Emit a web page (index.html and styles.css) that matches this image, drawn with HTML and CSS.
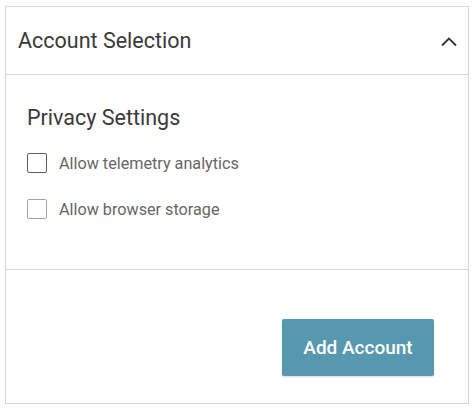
FILE: index.html
```html
<!DOCTYPE html>
<html>
<head>
<meta charset="utf-8">
<link rel="stylesheet" href="styles.css">
</head>
<body>
<div class="card">
  <div class="header">
    <span class="title">Account Selection</span>
    <svg class="chev" width="18" height="11" viewBox="0 0 18 11"><path d="M2 9.5 L9 2.5 L16 9.5" fill="none" stroke="#333" stroke-width="1.8"/></svg>
  </div>
  <div class="body">
    <div class="subtitle">Privacy Settings</div>
    <label class="row"><span class="box dark"></span><span class="lbl">Allow telemetry analytics</span></label>
    <label class="row"><span class="box"></span><span class="lbl">Allow browser storage</span></label>
  </div>
  <div class="footer">
    <button class="btn">Add Account</button>
  </div>
</div>
</body>
</html>
```
FILE: styles.css
```css
html, body { margin: 0; padding: 0; background: #fff; }
body { font-family: Roboto, "Noto Sans", sans-serif; }
.card {
  margin: 6px 5px 0 5px;
  width: 462px;
  height: 396px;
  border: 1px solid #d6d6d6;
  display: flex;
  flex-direction: column;
  box-sizing: content-box;
}
.header {
  height: 67px;
  border-bottom: 1px solid #d6d6d6;
  display: flex;
  align-items: center;
  justify-content: space-between;
  padding: 0 10px 0 12px;
}
.title { font-size: 21.5px; color: #3a3a3a; }
.chev { display: block; margin-top: 1px; }
.body {
  height: 195px;
  border-bottom: 1px solid #d6d6d6;
  padding: 30px 0 0 21px;
  box-sizing: border-box;
}
.subtitle { font-size: 21.5px; color: #3a3a3a; margin-bottom: 22px; line-height: 26px; }
.row { display: flex; align-items: center; height: 20px; margin-bottom: 26px; }
.box {
  border: 1.5px solid #a3a3a3;
  border-radius: 2px;
  margin-right: 12px;
  box-sizing: border-box;
  width: 20px; height: 20px;
}
.box.dark { border-color: #5e5e5e; }
.lbl { font-size: 16.2px; color: #666; }
.footer {
  flex: 1;
  display: flex;
  justify-content: flex-end;
  align-items: flex-start;
  padding: 49px 34px 0 0;
}
.btn {
  width: 152px;
  height: 57px;
  background: #5898ae;
  color: #fff;
  border: none;
  border-radius: 2px;
  font-family: Roboto, sans-serif;
  font-size: 19px;
  font-weight: 500;
  box-shadow: 0 1px 2px rgba(0,0,0,0.15);
}
```
